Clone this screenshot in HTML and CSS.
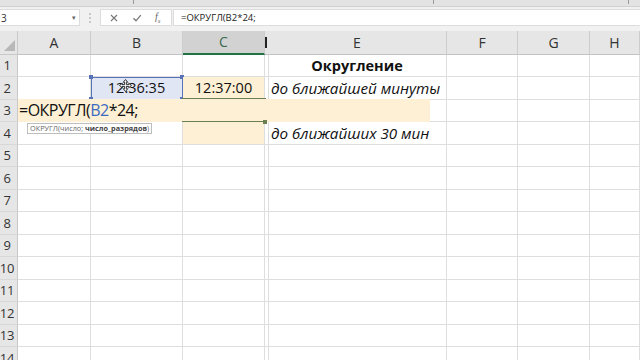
FILE: index.html
```html
<!DOCTYPE html>
<html lang="ru">
<head>
<meta charset="utf-8">
<title>Excel</title>
<link rel="stylesheet" href="styles.css">
</head>
<body>
<div class="ribbon-edge">
  <span class="tick t1"></span><span class="tick t2"></span><span class="tick t3"></span>
</div>
<div class="fbar">
  <div class="namebox"><span>3</span><span class="dd">&#9662;</span></div>
  <div class="dots"><i></i><i></i><i></i></div>
  <div class="fbtns">
    <svg class="ico" viewBox="0 0 10 10"><path d="M2 2 L8 8 M8 2 L2 8" stroke="#777" stroke-width="1.1" fill="none"/></svg>
    <svg class="ico" viewBox="0 0 10 10"><path d="M1.5 5.2 L4 7.8 L8.8 2.2" stroke="#777" stroke-width="1.3" fill="none"/></svg>
    <span class="fx">f<sub>x</sub></span>
  </div>
  <div class="finput">=ОКРУГЛ(B2*24;</div>
</div>
<div class="sheet">
  <div class="corner"><span class="tri"></span></div>
  <div class="ch">A</div>
  <div class="ch">B</div>
  <div class="ch ch-act">C</div>
  <div class="ch ch-d"><span class="cur"></span></div>
  <div class="ch">E</div>
  <div class="ch">F</div>
  <div class="ch">G</div>
  <div class="ch">H</div>

  <div class="rh">1</div><div class="c"></div><div class="c"></div><div class="c"></div><div class="c"></div><div class="c bold center">Округление</div><div class="c"></div><div class="c"></div><div class="c"></div>

  <div class="rh">2</div><div class="c"></div>
  <div class="c sel center">12:36:35
    <span class="h h1"></span><span class="h h2"></span><span class="h h3"></span><span class="h h4"></span>
    <svg class="move" viewBox="0 0 12 12"><path d="M6 0.5 L8 3 L6.8 3 L6.8 5.2 L9 5.2 L9 4 L11.5 6 L9 8 L9 6.8 L6.8 6.8 L6.8 9 L8 9 L6 11.5 L4 9 L5.2 9 L5.2 6.8 L3 6.8 L3 8 L0.5 6 L3 4 L3 5.2 L5.2 5.2 L5.2 3 L4 3 Z" fill="#fff" stroke="#111" stroke-width="0.8"/></svg>
  </div>
  <div class="c fill center">12:37:00</div><div class="c"></div><div class="c ital">до ближайшей минуты</div><div class="c"></div><div class="c"></div><div class="c"></div>

  <div class="rh">3</div>
  <div class="c">
    <div class="editor">=ОКРУГЛ(<span class="ref">B2</span>*24;</div>
    <div class="tip">ОКРУГЛ(число; <b>число_разрядов</b>)</div>
  </div>
  <div class="c"></div><div class="c"><span class="act"></span></div><div class="c"></div><div class="c"></div><div class="c"></div><div class="c"></div><div class="c"></div>

  <div class="rh">4</div><div class="c"></div><div class="c"></div><div class="c fill"></div><div class="c"></div><div class="c ital">до ближайших 30 мин</div><div class="c"></div><div class="c"></div><div class="c"></div>

  <div class="rh">5</div><div class="c"></div><div class="c"></div><div class="c"></div><div class="c"></div><div class="c"></div><div class="c"></div><div class="c"></div><div class="c"></div>
  <div class="rh">6</div><div class="c"></div><div class="c"></div><div class="c"></div><div class="c"></div><div class="c"></div><div class="c"></div><div class="c"></div><div class="c"></div>
  <div class="rh">7</div><div class="c"></div><div class="c"></div><div class="c"></div><div class="c"></div><div class="c"></div><div class="c"></div><div class="c"></div><div class="c"></div>
  <div class="rh">8</div><div class="c"></div><div class="c"></div><div class="c"></div><div class="c"></div><div class="c"></div><div class="c"></div><div class="c"></div><div class="c"></div>
  <div class="rh">9</div><div class="c"></div><div class="c"></div><div class="c"></div><div class="c"></div><div class="c"></div><div class="c"></div><div class="c"></div><div class="c"></div>
  <div class="rh">10</div><div class="c"></div><div class="c"></div><div class="c"></div><div class="c"></div><div class="c"></div><div class="c"></div><div class="c"></div><div class="c"></div>
  <div class="rh">11</div><div class="c"></div><div class="c"></div><div class="c"></div><div class="c"></div><div class="c"></div><div class="c"></div><div class="c"></div><div class="c"></div>
  <div class="rh">12</div><div class="c"></div><div class="c"></div><div class="c"></div><div class="c"></div><div class="c"></div><div class="c"></div><div class="c"></div><div class="c"></div>
  <div class="rh">13</div><div class="c"></div><div class="c"></div><div class="c"></div><div class="c"></div><div class="c"></div><div class="c"></div><div class="c"></div><div class="c"></div>
  <div class="rh">14</div><div class="c"></div><div class="c"></div><div class="c"></div><div class="c"></div><div class="c"></div><div class="c"></div><div class="c"></div><div class="c"></div>
</div>
</body>
</html>
```
FILE: styles.css
```css
* { box-sizing: border-box; }
html, body { margin: 0; padding: 0; }
body {
  width: 640px; height: 360px; overflow: hidden;
  background: #fff;
  font-family: "Open Sans", "Noto Sans", sans-serif;
  color: #111;
}
.ribbon-edge {
  height: 7px; background: #e3e3e3; border-bottom: 1px solid #d0d0d0;
  position: relative;
}
.tick { position: absolute; top: 0; width: 1px; height: 4px; background: #9a9a9a; }
.t1 { left: 133px; } .t2 { left: 433px; } .t3 { left: 628px; }
.fbar {
  height: 24px; background: #f1f1f1;
  display: flex; align-items: flex-start; padding-top: 2px;
}
.namebox {
  width: 80px; height: 17px; background: #fff;
  border: 1px solid #dcdcdc; border-left: none;
  display: flex; align-items: center; justify-content: space-between;
  padding: 0 3px 0 1px; font-size: 10px; color: #333;
}
.dd { font-size: 7px; color: #666; }
.dots { width: 20px; display: flex; flex-direction: column; align-items: center; gap: 2px; padding-top: 4px; }
.dots i { width: 2px; height: 2px; background: #c8c8c8; display: block; }
.fbtns {
  width: 72px; height: 17px; display: flex; align-items: center; gap: 13px; padding-left: 8px;
  background: #fff; border: 1px solid #dcdcdc; margin-right: 1px;
}
.ico { width: 10px; height: 10px; }
.fx { font-family: "Liberation Serif", serif; font-style: italic; font-size: 10px; color: #666; }
.fx sub { font-size: 6px; }
.finput {
  flex: 1; height: 17px; background: #fff; border: 1px solid #dcdcdc; border-right: none;
  font-size: 9.5px; padding-left: 7px; line-height: 15px; color: #222;
}
.sheet {
  display: grid;
  grid-template-columns: 18px 73px 92px 82px 3px 179px 71px 72px 50px;
  grid-template-rows: 23.5px repeat(14, 22.5px);
}
.corner { background: #e6e6e6; border-right: 1px solid #c9c9c9; border-bottom: 1px solid #c9c9c9; position: relative; }
.tri { position: absolute; right: 2px; bottom: 3px; width: 0; height: 0;
  border-left: 11px solid transparent; border-bottom: 11px solid #b8b8b8; }
.ch {
  background: #e6e6e6; border-right: 1px solid #cdcdcd; border-bottom: 1px solid #c3c3c3;
  display: flex; align-items: center; justify-content: center;
  font-size: 14px; color: #333;
}
.ch-act { background: #d2d2d2; color: #3a6b4f; border-bottom: 2px solid #217346; }
.ch-d { position: relative; border-right: none; }
.cur { position: absolute; left: 0; top: 6px; width: 2px; height: 11px; background: #222; }
.rh {
  background: #e6e6e6; border-right: 1px solid #c9c9c9; border-bottom: 1px solid #d8d8d8;
  display: flex; align-items: center; justify-content: center; padding-right: 3px;
  font-size: 13px; color: #333; white-space: nowrap; letter-spacing: -0.3px;
}
.c {
  border-right: 1px solid #dedede; border-bottom: 1px solid #dedede;
  font-size: 14.5px; display: flex; align-items: center; padding-left: 3px;
  white-space: nowrap; position: relative;
}
.center { justify-content: center; padding-left: 0; }
.bold { font-weight: bold; }
.ital { font-style: italic; font-size: 15.2px; }
.fill { background: #fdf0d4; }
.sel { background: #e1e6f4; outline: 1px solid #5872b8; outline-offset: -1px; }
.h { position: absolute; width: 4px; height: 4px; background: #5872b8; }
.h1 { left: -2px; top: -2px; } .h2 { right: -2px; top: -2px; }
.h3 { left: -2px; bottom: -2px; } .h4 { right: -2px; bottom: -2px; }
.move { position: absolute; left: 28px; top: 2px; width: 13px; height: 13px; }
.editor {
  position: absolute; left: 0; top: -1px; width: 412px; height: 23px;
  background: #fdf0d4; z-index: 2; font-size: 16px; letter-spacing: -0.5px;
  line-height: 23px; padding-left: 1px; color: #111;
}
.ref { color: #3d6bc2; }
.tip {
  position: absolute; left: 9px; top: 23px; height: 11px; z-index: 3;
  background: #fff; border: 1px solid #bdbdbd; font-size: 7.3px; line-height: 9px;
  padding: 0 2px; color: #666; letter-spacing: 0;
}
.tip b { color: #444; }
.act {
  position: absolute; left: -1px; top: -2px; width: 84px; height: 24px;
  border-top: 1.5px solid #6b7f50; border-bottom: 1.5px solid #6b7f50; z-index: 3;
}
.act::after { content: ""; position: absolute; right: -1px; bottom: -3px; width: 4px; height: 4px; background: #6b7f50; }
```
